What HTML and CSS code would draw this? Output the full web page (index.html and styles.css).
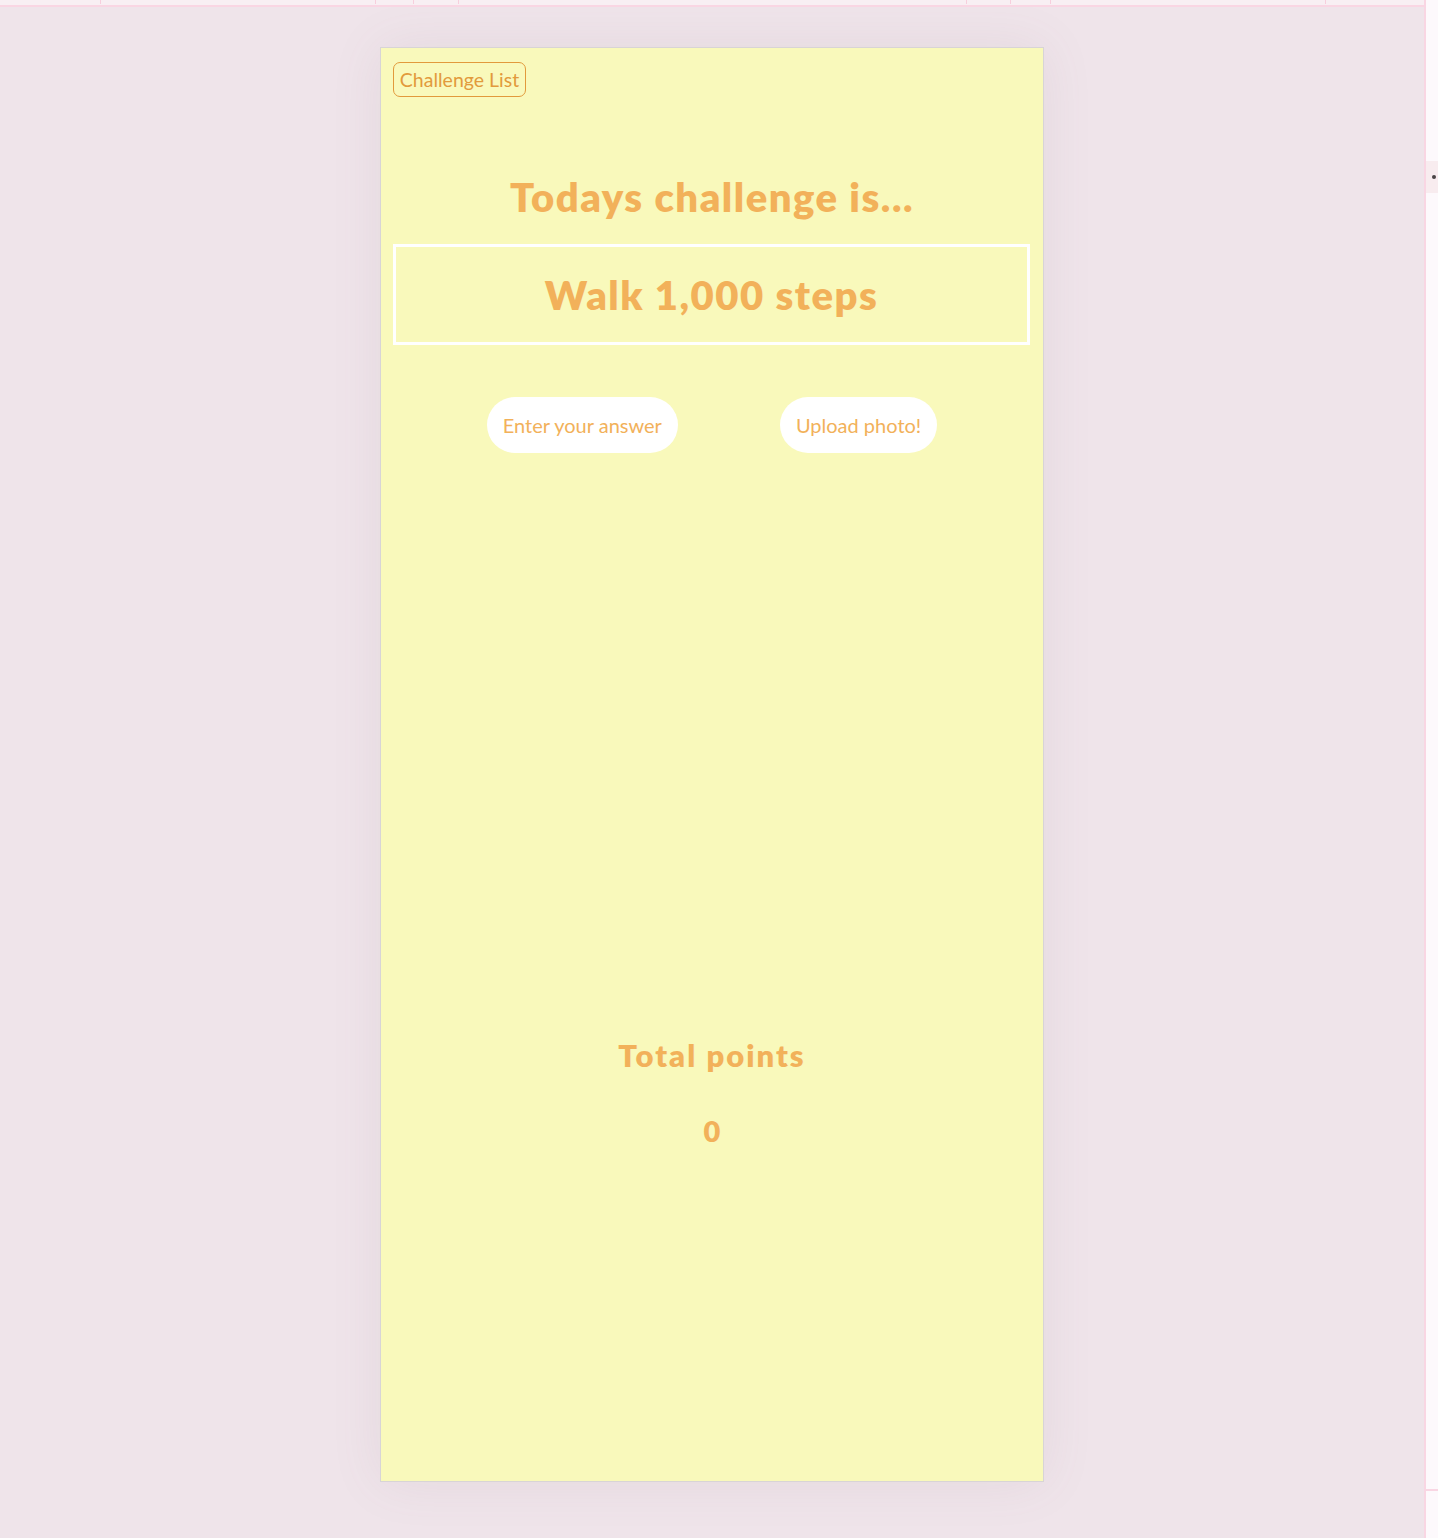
FILE: index.html
```html
<!DOCTYPE html>
<html lang="en">
<head>
<meta charset="utf-8">
<title>Todays challenge</title>
<link rel="stylesheet" href="styles.css">
</head>
<body>
<div class="layout">
  <div class="stage">
    <div class="ruler">
      <span class="tick" style="left:100px"></span>
      <span class="tick" style="left:375px"></span>
      <span class="tick" style="left:413px"></span>
      <span class="tick" style="left:458px"></span>
      <span class="tick" style="left:966px"></span>
      <span class="tick" style="left:1010px"></span>
      <span class="tick" style="left:1050px"></span>
      <span class="tick" style="left:1325px"></span>
    </div>
    <div class="canvas">
      <div class="card">
        <div class="top-row">
          <button class="list-btn">Challenge List</button>
        </div>
        <h1 class="title">Todays challenge is...</h1>
        <div class="challenge-box">Walk 1,000 steps</div>
        <div class="actions">
          <button class="pill">Enter your answer</button>
          <button class="pill">Upload photo!</button>
        </div>
        <h2 class="points-label">Total points</h2>
        <div class="points-value">0</div>
      </div>
    </div>
  </div>
  <aside class="side">
    <div class="side-row"><span class="dot"></span></div>
    <div class="side-fill"></div>
    <div class="side-line"></div>
  </aside>
</div>
</body>
</html>
```

FILE: styles.css
```css
html, body {
  margin: 0;
  padding: 0;
}
body {
  background: #efe4ea;
  font-family: "Lato", "Open Sans", "Liberation Sans", sans-serif;
  height: 1538px;
  overflow: hidden;
}
.layout {
  display: grid;
  grid-template-columns: 1424px 1fr;
  height: 1538px;
}
.stage {
  display: flex;
  flex-direction: column;
}
.ruler {
  position: relative;
  height: 5px;
  background: #f8eff3;
  border-bottom: 2px solid #f9d6e3;
}
.tick {
  position: absolute;
  top: 0;
  width: 1px;
  height: 4px;
  background: #f7cfdd;
}
.canvas {
  display: flex;
  justify-content: center;
  padding-top: 40px;
}
.card {
  width: 662px;
  height: 1433px;
  background: #f9f9bb;
  border: 1px solid #d8d4d6;
  box-shadow: 0 0 50px rgba(120, 100, 110, 0.09);
  display: flex;
  flex-direction: column;
  align-items: stretch;
}
.top-row {
  padding: 14px 12px 0;
  display: flex;
}
.list-btn {
  font-family: inherit;
  font-size: 19.5px;
  color: #e29a3c;
  background: transparent;
  border: 1.5px solid #e29a3c;
  border-radius: 7px;
  height: 35px;
  padding: 0 5px;
  width: 133px;
  white-space: nowrap;
}
.title {
  margin: 76px 0 0;
  text-align: center;
  font-size: 40px;
  line-height: 48px;
  font-weight: 800;
  color: #f2b15a;
  letter-spacing: 1.5px;
}
.challenge-box {
  margin: 23px 13px 0 12px;
  height: 95px;
  border: 3px solid #ffffff;
  display: flex;
  align-items: center;
  justify-content: center;
  font-size: 40px;
  font-weight: 800;
  letter-spacing: 1.5px;
  color: #f2b15a;
}
.actions {
  margin-top: 52px;
  display: flex;
  justify-content: center;
  gap: 102px;
}
.pill {
  font-family: inherit;
  height: 56px;
  padding: 0 16px;
  border: none;
  border-radius: 28px;
  background: #ffffff;
  color: #f2b15a;
  font-size: 20px;
  white-space: nowrap;
}
.points-label {
  margin: 584px 0 0;
  text-align: center;
  font-size: 31px;
  line-height: 36px;
  font-weight: 800;
  letter-spacing: 2px;
  color: #f2b15a;
}
.points-value {
  margin-top: 40px;
  text-align: center;
  font-size: 29px;
  line-height: 36px;
  font-weight: 800;
  color: #f2b15a;
}
.side {
  border-left: 2px solid #f9d6e3;
  background: #fdf9fc;
  display: flex;
  flex-direction: column;
}
.side-row {
  margin-top: 161px;
  height: 32px;
  background: #f8ecef;
  display: flex;
  align-items: center;
  padding-left: 6px;
}
.dot {
  width: 4px;
  height: 4px;
  border-radius: 50%;
  background: #4a4446;
}
.side-fill {
  height: 1296px;
}
.side-line {
  height: 2px;
  background: #f9d6e3;
}
```
